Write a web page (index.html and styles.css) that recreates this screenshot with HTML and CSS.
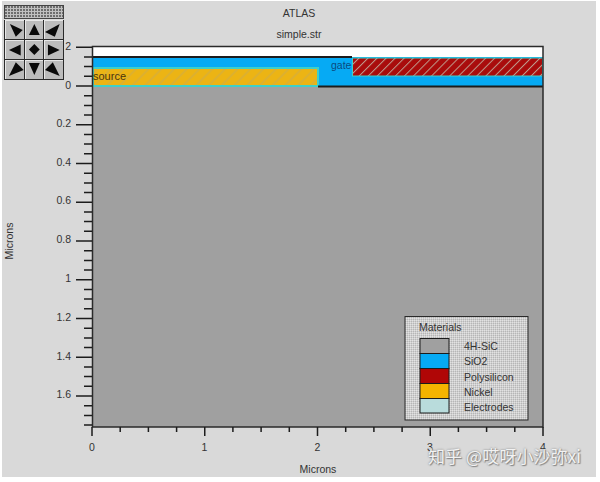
FILE: index.html
```html
<!DOCTYPE html>
<html lang="en">
<head>
<meta charset="utf-8">
<title>ATLAS simple.str</title>
<link rel="stylesheet" href="styles.css">
</head>
<body>
<main class="window">
  <header class="titles">
    <div class="title">ATLAS</div>
    <div class="title">simple.str</div>
  </header>

  <svg class="plot" viewBox="2 40 594 435" width="594" height="435" aria-label="Structure plot">
    <defs>
      <pattern id="goldHatch" width="9" height="9" patternUnits="userSpaceOnUse" patternTransform="rotate(45)">
        <rect width="9" height="9" fill="#ecb414"/>
        <rect width="2" height="9" fill="#dcb030"/>
      </pattern>
      <pattern id="polyHatch" width="6.4" height="6.4" patternUnits="userSpaceOnUse" patternTransform="rotate(45)">
        <rect width="6.4" height="6.4" fill="#a90c0c"/>
        <rect width="1" height="6.4" fill="#bf9a8c"/>
      </pattern>
      <pattern id="dither" width="2" height="2" patternUnits="userSpaceOnUse">
        <rect width="2" height="2" fill="#cfcfcf"/>
        <rect width="1" height="1" fill="#e2e2e2"/>
        <rect x="1" y="1" width="1" height="1" fill="#b6b6b6"/>
      </pattern>
    </defs>

    <rect class="sic" x="92" y="86" width="451" height="341"/>
    <rect class="void" x="92" y="47" width="451" height="10"/>
    <rect class="oxide" x="92" y="57" width="451" height="29"/>

    <rect class="nickel" x="93" y="68" width="225" height="18"/>
    <rect class="poly" x="352.500" y="58" width="190" height="18"/>

    <path class="edge" d="M92 57H352M318 86.500H543"/>
    <rect class="frame" x="92.500" y="46.500" width="450.500" height="380.500"/>

    <path class="tick" d="M76 47.250H92M76 86H92M76 124.750H92M76 163.500H92M76 202.250H92M76 241H92M76 279.750H92M76 318.500H92M76 357.250H92M76 396H92"/>
    <path class="tick" d="M84 56.900H92M84 66.600H92M84 76.300H92M84 95.700H92M84 105.400H92M84 115.100H92M84 134.400H92M84 144.100H92M84 153.800H92M84 173.200H92M84 182.900H92M84 192.600H92M84 211.900H92M84 221.600H92M84 231.300H92M84 250.700H92M84 260.400H92M84 270.100H92M84 289.400H92M84 299.100H92M84 308.800H92M84 328.200H92M84 337.900H92M84 347.600H92M84 366.900H92M84 376.600H92M84 386.300H92M84 405.700H92M84 415.400H92M84 425.100H92"/>
    <path class="tick" d="M92 427V436M204.750 427V436M317.500 427V436M430.250 427V436M543 427V436"/>
    <path class="tick" d="M120.200 427V432M148.400 427V432M176.600 427V432M232.900 427V432M261.100 427V432M289.300 427V432M345.700 427V432M373.900 427V432M402.100 427V432M458.400 427V432M486.600 427V432M514.800 427V432"/>

    <g class="axis-y">
      <text x="71" y="50">2</text>
      <text x="71" y="89">0</text>
      <text x="71" y="127">0.2</text>
      <text x="71" y="166">0.4</text>
      <text x="71" y="204">0.6</text>
      <text x="71" y="243">0.8</text>
      <text x="71" y="282">1</text>
      <text x="71" y="321">1.2</text>
      <text x="71" y="360">1.4</text>
      <text x="71" y="398">1.6</text>
    </g>
    <g class="axis-x">
      <text x="92" y="451">0</text>
      <text x="204.500" y="451">1</text>
      <text x="317.500" y="451">2</text>
      <text x="430" y="451">3</text>
      <text x="543" y="451">4</text>
      <text x="318" y="473">Microns</text>
      <text transform="translate(13 241) rotate(-90)">Microns</text>
    </g>

    <text class="region-label" x="93" y="79.500">source</text>
    <text class="region-label gate-label" x="331" y="69">gate</text>

    <g class="legend">
      <rect class="legend-box" x="405" y="316.500" width="123" height="103.500"/>
      <text x="419" y="331">Materials</text>
      <rect class="swatch sic" x="420" y="338.500" width="29" height="15"/>
      <rect class="swatch oxide" x="420" y="353.500" width="29" height="15"/>
      <rect class="swatch solid-poly" x="420" y="368.500" width="29" height="15"/>
      <rect class="swatch solid-nickel" x="420" y="383.500" width="29" height="15"/>
      <rect class="swatch electrode" x="420" y="398.500" width="29" height="14.500"/>
      <text x="464" y="350">4H-SiC</text>
      <text x="464" y="365">SiO2</text>
      <text x="464" y="381">Polysilicon</text>
      <text x="464" y="396">Nickel</text>
      <text x="464" y="411">Electrodes</text>
    </g>
  </svg>

  <nav class="palette" aria-label="Pan controls">
    <div class="grip"></div>
    <div class="pad">
      <button class="pad-btn" type="button"><svg class="arrow" viewBox="0 0 19 19"><polygon points="5,4 18,10 11,17"/></svg></button>
      <button class="pad-btn" type="button"><svg class="arrow" viewBox="0 0 19 19"><polygon points="9.500,4 15,15 4,15"/></svg></button>
      <button class="pad-btn" type="button"><svg class="arrow" viewBox="0 0 19 19"><polygon points="16,4 1,12 11,17"/></svg></button>
      <button class="pad-btn" type="button"><svg class="arrow" viewBox="0 0 19 19"><polygon points="4,10 16,4.500 16,15.500"/></svg></button>
      <button class="pad-btn" type="button"><svg class="arrow" viewBox="0 0 19 19"><polygon points="9.500,4 15,9.500 9.500,15 4,9.500"/></svg></button>
      <button class="pad-btn" type="button"><svg class="arrow" viewBox="0 0 19 19"><polygon points="4,4.500 16,10 4,15.500"/></svg></button>
      <button class="pad-btn" type="button"><svg class="arrow" viewBox="0 0 19 19"><polygon points="4,16 11,2 19,10"/></svg></button>
      <button class="pad-btn" type="button"><svg class="arrow" viewBox="0 0 19 19"><polygon points="4,3 15,3 9.500,15"/></svg></button>
      <button class="pad-btn" type="button"><svg class="arrow" viewBox="0 0 19 19"><polygon points="16,16 9,2 1,10"/></svg></button>
    </div>
  </nav>

  <div class="watermark">知乎 @哎呀小沙弥xi</div>
</main>
</body>
</html>
```

FILE: styles.css
```css
html, body {
  margin: 0;
  padding: 0;
  background: #ffffff;
}

body {
  width: 600px;
  height: 482px;
  overflow: hidden;
}

.window {
  position: relative;
  margin: 1px 0 0 2px;
  width: 594px;
  height: 476px;
  background: #d9d9d9;
  font-family: "Liberation Sans", Arial, sans-serif;
  color: #333;
  overflow: hidden;
}

.titles {
  display: flex;
  flex-direction: column;
  align-items: center;
  gap: 9px;
  height: 39px;
  padding-top: 6px;
  box-sizing: border-box;
}

.title {
  font-size: 10.500px;
  line-height: 12px;
}

.plot {
  display: block;
}

.plot text {
  font-family: "Liberation Sans", Arial, sans-serif;
  font-size: 10.500px;
  fill: #333;
}

.sic { fill: #a0a0a0; }
.void { fill: #ffffff; }
.oxide { fill: #06aaf4; }

.nickel {
  fill: url(#goldHatch);
  stroke: #3fcfc8;
  stroke-width: 2;
}

.poly {
  fill: url(#polyHatch);
  stroke: #3fcfc8;
  stroke-width: 1;
}

.edge {
  fill: none;
  stroke: #1c1c1c;
  stroke-width: 2;
}

.frame {
  fill: none;
  stroke: #2a2a2a;
  stroke-width: 1.500;
}

.tick {
  fill: none;
  stroke: #1c1c1c;
  stroke-width: 1.500;
}

.axis-y text { text-anchor: end; }
.axis-x text { text-anchor: middle; }

.plot .region-label {
  font-size: 11px;
  fill: #4a3510;
}

.plot .gate-label {
  font-size: 10.500px;
  fill: #0a4a80;
}

.legend-box {
  fill: url(#dither);
  stroke: #2a2a2a;
  stroke-width: 1;
}

.swatch {
  stroke: #1c1c1c;
  stroke-width: 1;
}

.solid-poly { fill: #b00606; }
.solid-nickel { fill: #f5b400; }
.electrode { fill: #b9dcdc; }

.palette {
  position: absolute;
  left: 2px;
  top: 4px;
  width: 60px;
}

.grip {
  height: 14px;
  box-sizing: border-box;
  border: 1px solid #444;
  background-color: #c0c0c0;
  background-image: radial-gradient(circle at 1px 1px, #505050 0.600px, transparent 1px);
  background-size: 3px 3px;
}

.pad {
  display: grid;
  grid-template-columns: repeat(3, 1fr);
  gap: 1px;
  margin-top: 1px;
  background: #2a2a2a;
  border-bottom: 1px solid #2a2a2a;
  border-left: 1px solid #2a2a2a;
  border-right: 1px solid #2a2a2a;
}

.pad-btn {
  display: block;
  height: 19px;
  padding: 0;
  border: 0;
  background: #bcbcbc;
  box-shadow: inset 1px 1px 0 #e8e8e8;
}

.arrow {
  display: block;
  width: 100%;
  height: 19px;
  fill: #0a0a0a;
}

.watermark {
  position: absolute;
  left: 426px;
  top: 445px;
  font-family: "Noto Sans CJK SC", "Noto Sans", sans-serif;
  font-size: 17px;
  line-height: 20px;
  letter-spacing: 0.100px;
  white-space: nowrap;
  color: #f2f2f2;
  text-shadow: 0 0 2px #777, 1px 1px 1px #888;
}
```
